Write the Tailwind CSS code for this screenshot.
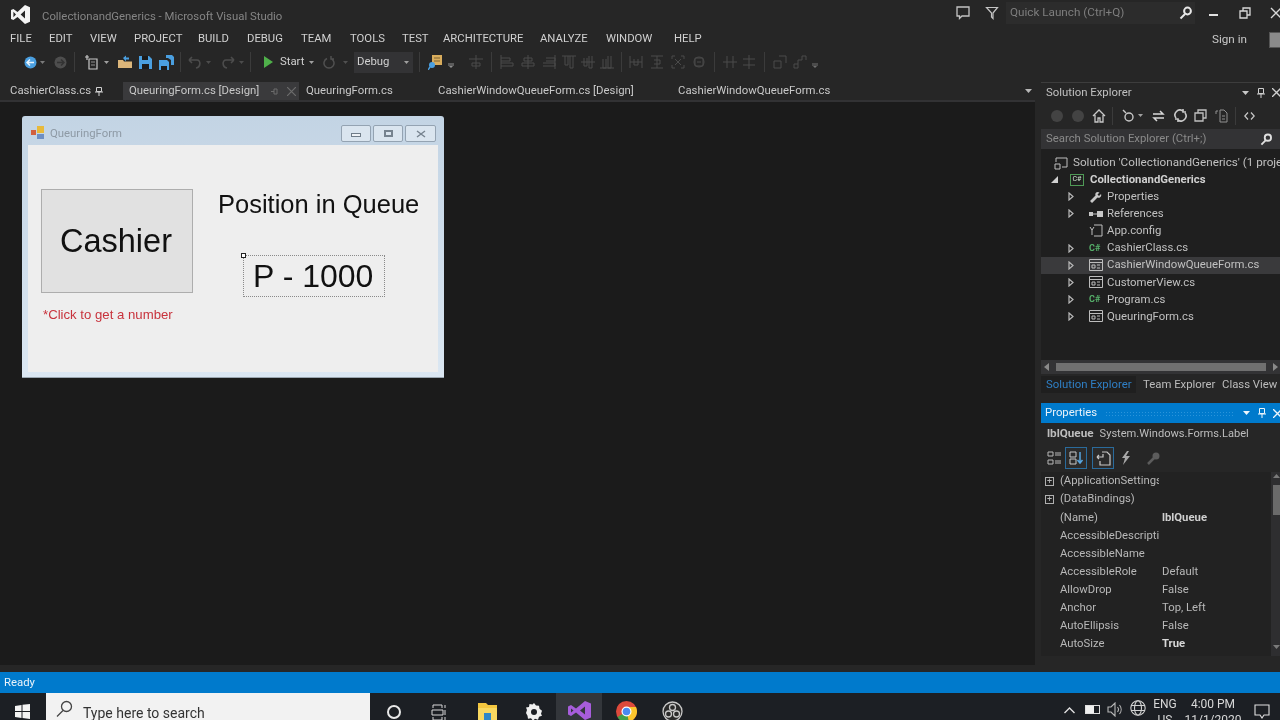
<!DOCTYPE html>
<html lang="en">
<head>
  <meta charset="UTF-8">
  <meta name="viewport" content="width=device-width, initial-scale=1.0">
  <title>CollectionandGenerics - Microsoft Visual Studio</title>
  <script src="https://cdn.jsdelivr.net/npm/@tailwindcss/browser@4"></script>
</head>
<body class="bg-[#262626]">
  <div class="w-[1280px] h-[720px] overflow-hidden flex flex-col bg-[#262626] text-[#c8c8c8] text-[11.35px] leading-none font-['Roboto',sans-serif] blur-[0.35px]">

    <!-- title bar -->
    <div class="h-[28px] shrink-0 flex items-center relative">
      <svg class="ml-[10px] w-[21px] h-[21px]" viewBox="0 0 21 21"><path d="M15 1l5 2.200v14.600L15 20 7.500 13 3.400 16 1 15V6l2.400-1L7.500 8zM3.400 7.800v5.400l2.600-2.700zM15 6.500l-4.400 4 4.400 4z" fill="#f4f4f4" fill-rule="evenodd"/></svg>
      <span class="ml-[11px] mt-[6px] text-[#858585] whitespace-nowrap">CollectionandGenerics - Microsoft Visual Studio</span>
      <div class="ml-auto flex items-center mt-[-2px]">
        <svg class="w-[16px] h-[16px]" viewBox="0 0 16 16" fill="none" stroke="#c4c4c4" stroke-width="1.300"><path d="M2 2h12v9H7l-2.500 2.500V11H2z"/></svg>
        <svg class="ml-[14px] w-[14px] h-[14px]" viewBox="0 0 14 14" fill="none" stroke="#c4c4c4" stroke-width="1.200"><path d="M1.500 1.500h11L8 7v5.500L6.500 11V7z"/></svg>
        <div class="ml-[7px] w-[189px] h-[22px] bg-[#2c2c2c] flex items-center justify-between pl-[4px] pr-[2px]">
          <span class="text-[#7e7e7e] text-[11.7px]">Quick Launch (Ctrl+Q)</span>
          <svg class="w-[14px] h-[14px]" viewBox="0 0 14 14" fill="none" stroke="#e8e8e8" stroke-width="2"><circle cx="8.500" cy="5" r="3.400"/><path d="M6 8l-4.500 4.500"/></svg>
        </div>
        <div class="ml-[14px] w-[9px] h-[2px] bg-[#e0e0e0] mt-[4px]"></div>
        <svg class="ml-[21px] w-[12px] h-[12px]" viewBox="0 0 12 12" fill="none" stroke="#d8d8d8" stroke-width="1.300"><path d="M1 4h7v7H1zM4 4V1h7v7H8"/></svg>
        <svg class="ml-[19px] w-[12px] h-[12px] mr-[-2px]" viewBox="0 0 12 12" fill="none" stroke="#d8d8d8" stroke-width="1.400"><path d="M1 1l10 10M11 1L1 11"/></svg>
      </div>
    </div>

    <!-- menu bar -->
    <div class="h-[22px] shrink-0 flex items-center pl-[10px] text-[#d0d0d0] text-[11.3px]">
      <span class="w-[39px]">FILE</span>
      <span class="w-[41px]">EDIT</span>
      <span class="w-[44px]">VIEW</span>
      <span class="w-[64px]">PROJECT</span>
      <span class="w-[49px]">BUILD</span>
      <span class="w-[54px]">DEBUG</span>
      <span class="w-[49px]">TEAM</span>
      <span class="w-[52px]">TOOLS</span>
      <span class="w-[41px]">TEST</span>
      <span class="w-[97px]">ARCHITECTURE</span>
      <span class="w-[66px]">ANALYZE</span>
      <span class="w-[68px]">WINDOW</span>
      <span>HELP</span>
      <span class="ml-auto mr-[22px] mt-[2px] text-[#c8c8c8] text-[11.7px]">Sign in</span>
      <div class="w-[12px] h-[16px] bg-[#8a8a8a] border border-[#555] mr-[-1px] mt-[2px] shrink-0"></div>
    </div>

    <!-- toolbar -->
    <div class="h-[26px] shrink-0 flex items-center pb-[2px]">
      <svg class="ml-[24px] w-[13px] h-[13px]" viewBox="0 0 13 13"><circle cx="6.500" cy="6.500" r="6" fill="#4a9fe0"/><path d="M3 6.500h7M6 3.500l-3 3 3 3" fill="none" stroke="#e8f3fc" stroke-width="1.500"/></svg>
      <svg class="ml-[3px] w-[5px] h-[3px]" viewBox="0 0 5 3"><path d="M0 0h5L2.500 3z" fill="#7a7a7a"/></svg>
      <svg class="ml-[9px] w-[13px] h-[13px]" viewBox="0 0 13 13"><circle cx="6.500" cy="6.500" r="6" fill="#4e4e4e"/><path d="M3 6.500h7M7 3.500l3 3-3 3" fill="none" stroke="#333" stroke-width="1.500"/></svg>
      <div class="ml-[7px] w-px h-[20px] bg-[#3b3b3b]"></div>
      <svg class="ml-[10px] w-[14px] h-[16px]" viewBox="0 0 14 16" fill="none" stroke="#c8c8c8" stroke-width="1.200"><path d="M4 5h8v10H4zM2 1v5M0 3h4"/><path d="M6 8h4M6 11h4" stroke="#909090"/></svg>
      <svg class="ml-[5px] w-[5px] h-[3px]" viewBox="0 0 5 3"><path d="M0 0h5L2.500 3z" fill="#a0a0a0"/></svg>
      <svg class="ml-[9px] w-[14px] h-[14px]" viewBox="0 0 14 14"><path d="M0 5h5l1 1.500h8V13H0z" fill="#dcb67a"/><path d="M5 3l3-2.500v2h3v2H8v2z" fill="#4a9fe0"/></svg>
      <svg class="ml-[7px] w-[13px] h-[13px]" viewBox="0 0 13 13"><path d="M0 0h10l3 3v10H0z" fill="#4a9fe0"/><path d="M3 0h6v4H3zM3 8h7v5H3z" fill="#1b1b1b"/></svg>
      <svg class="ml-[7px] w-[15px] h-[15px]" viewBox="0 0 15 15"><path d="M0 5h8l2 2v8H0z" fill="#4a9fe0"/><path d="M2 11h6v4H2z" fill="#1b1b1b"/><path d="M7 0h6l2 2v8h-3V5L9 3H7z" fill="#4a9fe0"/></svg>
      <div class="ml-[6px] w-px h-[20px] bg-[#3b3b3b]"></div>
      <svg class="ml-[7px] w-[14px] h-[14px]" viewBox="0 0 14 14" fill="none" stroke="#4c4c4c" stroke-width="1.600"><path d="M1 5l3-3M1 5l3 3M1 5h8c4 0 4 7-1 8"/></svg>
      <svg class="ml-[4px] w-[5px] h-[3px]" viewBox="0 0 5 3"><path d="M0 0h5L2.500 3z" fill="#4c4c4c"/></svg>
      <svg class="ml-[10px] w-[14px] h-[14px]" viewBox="0 0 14 14" fill="none" stroke="#4c4c4c" stroke-width="1.600"><path d="M13 5l-3-3M13 5l-3 3M13 5H5c-4 0-4 7 1 8"/></svg>
      <svg class="ml-[4px] w-[5px] h-[3px]" viewBox="0 0 5 3"><path d="M0 0h5L2.500 3z" fill="#4c4c4c"/></svg>
      <div class="ml-[6px] w-px h-[20px] bg-[#3b3b3b]"></div>
      <svg class="ml-[12px] w-[10px] h-[12px]" viewBox="0 0 10 12"><path d="M1 0l9 6-9 6z" fill="#4fb04a"/></svg>
      <span class="ml-[7px] text-[#d0d0d0] w-[24px]">Start</span>
      <svg class="ml-[5px] w-[5px] h-[3px]" viewBox="0 0 5 3"><path d="M0 0h5L2.500 3z" fill="#a0a0a0"/></svg>
      <svg class="ml-[9px] w-[13px] h-[13px]" viewBox="0 0 13 13" fill="none" stroke="#505050" stroke-width="1.500"><path d="M8 2.500a5 5 0 1 1-4 0M8 0v3h3"/></svg>
      <svg class="ml-[7px] w-[5px] h-[3px]" viewBox="0 0 5 3"><path d="M0 0h5L2.500 3z" fill="#505050"/></svg>
      <div class="ml-[6px] w-[59px] h-[21px] bg-[#333335] flex items-center justify-between pl-[3px] pr-[4px] text-[#d0d0d0]">
        <span>Debug</span>
        <svg class="w-[5px] h-[3px]" viewBox="0 0 5 3"><path d="M0 0h5L2.500 3z" fill="#a0a0a0"/></svg>
      </div>
      <div class="ml-[6px] w-px h-[20px] bg-[#3b3b3b]"></div>
      <svg class="ml-[8px] w-[15px] h-[15px]" viewBox="0 0 15 15"><path d="M4 0h10v10H4z" fill="#d8ac5c"/><path d="M6 3h6M6 6h6" stroke="#7c6230"/><circle cx="4" cy="10" r="3" fill="#4a9fe0"/><path d="M2 12l-2 3" stroke="#4a9fe0" stroke-width="1.500"/></svg>
      <svg class="ml-[5px] mt-[7px] w-[6px] h-[5px]" viewBox="0 0 6 5"><path d="M0 0h6M0 2h6" stroke="#909090"/><path d="M1 3h4L3 5z" fill="#909090"/></svg>

      <!-- layout toolbar, disabled -->
      <div class="ml-[15px] flex items-center gap-[5px]">
        <svg class="w-[14px] h-[14px]" viewBox="0 0 14 14" fill="none" stroke="#4a4a4a"><path d="M0 4h14M7 0v14M3 8h8v3H3z"/></svg>
        <div class="mx-[3px] w-px h-[20px] bg-[#3b3b3b]"></div>
        <svg class="w-[14px] h-[14px]" viewBox="0 0 14 14" fill="none" stroke="#4a4a4a"><path d="M1 0v14M1 3h9v3H1M1 8h12v3H1"/></svg>
        <svg class="ml-[2px] w-[14px] h-[14px]" viewBox="0 0 14 14" fill="none" stroke="#4a4a4a"><path d="M7 0v14M3 3h8v3H3zM1 8h12v3H1z"/></svg>
        <svg class="ml-[2px] w-[14px] h-[14px]" viewBox="0 0 14 14" fill="none" stroke="#4a4a4a"><path d="M13 0v14M4 3h9v3H4M1 8h12v3H1"/></svg>
        <svg class="ml-[1px] w-[14px] h-[14px]" viewBox="0 0 14 14" fill="none" stroke="#4a4a4a"><path d="M0 1h14M3 1v9h3V1M8 1v12h3V1"/></svg>
        <svg class="w-[14px] h-[14px]" viewBox="0 0 14 14" fill="none" stroke="#4a4a4a"><path d="M0 7h14M3 3v8h3V3M8 1v12h3V1"/></svg>
        <svg class="w-[14px] h-[14px]" viewBox="0 0 14 14" fill="none" stroke="#4a4a4a"><path d="M0 13h14M3 4v9h3V4M8 1v12h3V1"/></svg>
        <div class="mx-[2px] w-px h-[20px] bg-[#3b3b3b]"></div>
        <svg class="w-[14px] h-[14px]" viewBox="0 0 14 14" fill="none" stroke="#4a4a4a"><path d="M1 1v12M13 1v12M1 7h12M5 4v6h4V4"/></svg>
        <svg class="ml-[2px] w-[14px] h-[14px]" viewBox="0 0 14 14" fill="none" stroke="#4a4a4a"><path d="M1 1h12M1 13h12M7 1v12M4 5h6v4H4"/></svg>
        <svg class="ml-[2px] w-[14px] h-[14px]" viewBox="0 0 14 14" fill="none" stroke="#4a4a4a"><path d="M1 4V1h3M10 1h3v3M1 10v3h3M10 13h3v-3M4 4l6 6M10 4l-6 6"/></svg>
        <svg class="ml-[2px] w-[14px] h-[14px]" viewBox="0 0 14 14" fill="none" stroke="#4a4a4a"><circle cx="7" cy="7" r="5"/><path d="M3 3h8v8H3zM5 7h4"/></svg>
        <div class="mx-[3px] w-px h-[20px] bg-[#3b3b3b]"></div>
        <svg class="w-[14px] h-[14px]" viewBox="0 0 14 14" fill="none" stroke="#4a4a4a"><path d="M4 1v12M10 1v12M0 7h14"/></svg>
        <svg class="w-[14px] h-[14px]" viewBox="0 0 14 14" fill="none" stroke="#4a4a4a"><path d="M1 4h12M1 10h12M7 0v14"/></svg>
        <div class="mx-[3px] w-px h-[20px] bg-[#3b3b3b]"></div>
        <svg class="w-[14px] h-[14px]" viewBox="0 0 14 14" fill="none" stroke="#4a4a4a"><path d="M1 6h7v7H1zM6 1h7v7"/></svg>
        <svg class="ml-[1px] w-[14px] h-[14px]" viewBox="0 0 14 14" fill="none" stroke="#4a4a4a"><path d="M1 9h4v4H1zM5 9V5h4V1h4v4"/></svg>
        <svg class="mt-[7px] w-[6px] h-[5px]" viewBox="0 0 6 5"><path d="M0 0h6M0 2h6" stroke="#707070"/><path d="M1 3h4L3 5z" fill="#707070"/></svg>
      </div>
    </div>

    <!-- main area -->
    <div class="h-[596px] shrink-0 flex">

      <!-- document well -->
      <div class="w-[1035px] shrink-0 flex flex-col pb-[7px]">
        <div class="h-[18px] mt-[6px] shrink-0 flex items-stretch text-[#c8c8c8] relative whitespace-nowrap">
          <div class="w-[123px] pl-[10px] flex items-center">
            <span class="w-[85px]">CashierClass.cs</span>
            <svg class="w-[8px] h-[9px]" viewBox="0 0 8 9" fill="none" stroke="#d0d0d0"><path d="M1.500 .5h5v4h-5zM0 5h8M4 5v4"/></svg>
          </div>
          <div class="w-[176px] bg-[#3a3a3c] pl-[6px] flex items-center">
            <span class="w-[142px]">QueuringForm.cs [Design]</span>
            <svg class="w-[7px] h-[7px]" viewBox="0 0 7 7" fill="none" stroke="#6c6c6c"><path d="M0 3.500h3M3 1v5h3V1z"/></svg>
            <svg class="ml-[9px] w-[9px] h-[9px]" viewBox="0 0 9 9" fill="none" stroke="#6c6c6c" stroke-width="1.200"><path d="M0 0l9 9M9 0L0 9"/></svg>
          </div>
          <span class="w-[139px] pl-[7px] flex items-center">QueuringForm.cs</span>
          <span class="w-[240px] flex items-center">CashierWindowQueueForm.cs [Design]</span>
          <span class="flex items-center">CashierWindowQueueForm.cs</span>
          <svg class="absolute right-[3px] top-[7px] w-[7px] h-[4px]" viewBox="0 0 7 4"><path d="M0 0h7L3.500 4z" fill="#b8b8b8"/></svg>
        </div>
        <div class="h-[2px] shrink-0 bg-[#323234]"></div>

        <!-- designer surface -->
        <div class="flex-1 bg-[#1b1b1b] relative">
          <div class="absolute left-[22px] top-[14px] w-[422px] h-[262px] bg-gradient-to-b from-[#c3d4e4] to-[#dbe7f2] rounded-t-[3px] border-b border-[#9aa6b0]">
            <svg class="absolute left-[9px] top-[10px] w-[14px] h-[14px]" viewBox="0 0 14 14"><path d="M6 0h7v7H6z" fill="#e8b93a"/><path d="M0 4h5v5H0z" fill="#d2603f"/><path d="M6 8h7v5H6z" fill="#6d8fc4"/></svg>
            <span class="absolute left-[28px] top-[12px] text-[#8e9aa5]">QueuringForm</span>
            <div class="absolute left-[319px] top-[9px] w-[30px] h-[17px] border border-[#94a3b2] rounded-[2px] bg-[#dae5ef] flex items-center justify-center">
              <div class="w-[10px] h-[4px] border border-[#6f7c88] bg-[#eef2f6] mt-[2px]"></div>
            </div>
            <div class="absolute left-[351px] top-[9px] w-[30px] h-[17px] border border-[#94a3b2] rounded-[2px] bg-[#dae5ef] flex items-center justify-center">
              <div class="w-[9px] h-[7px] border-2 border-[#76838f]"></div>
            </div>
            <div class="absolute left-[383px] top-[9px] w-[31px] h-[17px] border border-[#94a3b2] rounded-[2px] bg-[#dae5ef] flex items-center justify-center">
              <svg class="w-[10px] h-[8px]" viewBox="0 0 10 8" fill="none" stroke="#76838f" stroke-width="1.400"><path d="M1 1l8 6M9 1L1 7"/></svg>
            </div>

            <div class="absolute left-[6px] top-[29px] w-[410px] h-[227px] bg-[#eeeeee] font-['Liberation_Sans',sans-serif] text-[#111]">
              <!-- form controls sit at designer coordinates -->
              <div class="absolute left-[13px] top-[44px] w-[152px] h-[104px] bg-[#e1e1e1] border border-[#adadad] flex items-center justify-center text-[32.5px] pr-[2px]">Cashier</div>
              <span class="absolute left-[190px] top-[45px] text-[25.5px] leading-[28px] whitespace-nowrap">Position in Queue</span>
              <div class="absolute left-[215px] top-[110px] w-[142px] h-[42px] border border-dotted border-[#8a8a8a] flex items-center pl-[9px] text-[32px] whitespace-nowrap">P - 1000</div>
              <div class="absolute left-[213px] top-[108px] w-[5px] h-[5px] bg-white border border-[#222]"></div>
              <span class="absolute left-[15px] top-[162px] text-[13.2px] leading-[15px] text-[#c8323c] whitespace-nowrap">*Click to get a number</span>
            </div>
          </div>
        </div>
      </div>

      <!-- right tool windows -->
      <div class="w-[239px] ml-[6px] shrink-0 flex flex-col">
        <!-- solution explorer -->
        <div class="h-[20px] mt-[6px] shrink-0 flex items-center pl-[5px] text-[#c0c0c0] border-t border-[#3d3d3d]">
          <span class="mt-[1px]">Solution Explorer</span>
          <svg class="ml-auto w-[7px] h-[4px]" viewBox="0 0 7 4"><path d="M0 0h7L3.500 4z" fill="#c8c8c8"/></svg>
          <svg class="ml-[8px] w-[8px] h-[10px]" viewBox="0 0 8 10" fill="none" stroke="#d0d0d0"><path d="M1.500 .5h5v5h-5zM0 6h8M4 6v4"/></svg>
          <svg class="ml-[7px] mr-[-1px] w-[9px] h-[9px]" viewBox="0 0 9 9" fill="none" stroke="#d0d0d0" stroke-width="1.300"><path d="M0 0l9 9M9 0L0 9"/></svg>
        </div>
        <div class="h-[27px] shrink-0 flex items-center pl-[10px]">
          <div class="w-[12px] h-[12px] rounded-full bg-[#434343]"></div>
          <div class="ml-[9px] w-[12px] h-[12px] rounded-full bg-[#434343]"></div>
          <svg class="ml-[8px] w-[14px] h-[14px]" viewBox="0 0 14 14" fill="none" stroke="#c8c8c8" stroke-width="1.300"><path d="M1 7l6-6 6 6M3 6v7h3V9h2v4h3V6"/></svg>
          <div class="ml-[6px] w-px h-[18px] bg-[#3b3b3b]"></div>
          <svg class="ml-[9px] w-[12px] h-[13px]" viewBox="0 0 12 13" fill="none" stroke="#c8c8c8" stroke-width="1.400"><circle cx="7" cy="8" r="4"/><path d="M1 1l3 3"/></svg>
          <svg class="ml-[4px] w-[5px] h-[3px]" viewBox="0 0 5 3"><path d="M0 0h5L2.500 3z" fill="#a0a0a0"/></svg>
          <svg class="ml-[9px] w-[13px] h-[12px]" viewBox="0 0 13 12" fill="none" stroke="#d8d8d8" stroke-width="1.500"><path d="M1 4h10L8 1M12 8H2l3 3"/></svg>
          <svg class="ml-[9px] w-[13px] h-[13px]" viewBox="0 0 13 13" fill="none" stroke="#c8c8c8" stroke-width="1.600"><path d="M2 9a5 5 0 0 1 7-7M11 4a5 5 0 0 1-7 7"/><path d="M9 0v3h3M4 13v-3H1"/></svg>
          <svg class="ml-[7px] w-[13px] h-[13px]" viewBox="0 0 13 13" fill="none" stroke="#c0c0c0" stroke-width="1.300"><path d="M1 4h8v8H1zM4 4V1h8v8H9"/></svg>
          <svg class="ml-[8px] w-[13px] h-[14px]" viewBox="0 0 13 14" fill="none" stroke="#909090"><path d="M3 2H1v3M5 1h4l3 3v9H5zM7 7h3M7 10h3"/></svg>
          <div class="ml-[7px] w-px h-[18px] bg-[#3b3b3b]"></div>
          <svg class="ml-[8px] w-[11px] h-[8px]" viewBox="0 0 11 8" fill="none" stroke="#c8c8c8" stroke-width="1.200"><path d="M4 .5L.8 4 4 7.500M7 .5L10.200 4 7 7.500"/></svg>
        </div>
        <div class="h-[20px] shrink-0 bg-[#333335] flex items-center pl-[5px] pr-[2px] text-[#8a8a8a] mr-[-1px]">
          <span>Search Solution Explorer (Ctrl+;)</span>
          <svg class="ml-auto mr-[6px] w-[13px] h-[13px]" viewBox="0 0 14 14" fill="none" stroke="#e0e0e0" stroke-width="2"><circle cx="8.500" cy="5" r="3.400"/><path d="M6 8l-4.500 4.500"/></svg>
        </div>

        <div class="h-[211px] shrink-0 bg-[#1f1f1f] pt-[5px] text-[#c0c0c0] overflow-hidden mr-[-1px]">
          <div class="h-[17.1px] flex items-center pl-[13px] whitespace-nowrap">
            <svg class="w-[14px] h-[14px] shrink-0" viewBox="0 0 14 14" fill="none" stroke="#c0c0c0"><path d="M2 6V2h11v9H8M1 8h5v5H1z"/></svg>
            <span class="ml-[5px] text-[11.7px]">Solution 'CollectionandGenerics' (1 project)</span>
          </div>
          <div class="h-[17.1px] flex items-center pl-[10px] whitespace-nowrap">
            <svg class="w-[7px] h-[7px] shrink-0" viewBox="0 0 7 7"><path d="M7 0v7H0z" fill="#d0d0d0"/></svg>
            <div class="ml-[12px] w-[14px] h-[12px] border border-[#4f9a56] text-[7px] text-[#cfe7d1] flex items-center justify-center shrink-0">C#</div>
            <span class="ml-[6px] font-bold text-[#d0d0d0]">CollectionandGenerics</span>
          </div>
          <div class="h-[17.1px] flex items-center pl-[27px]">
            <svg class="w-[6px] h-[9px] shrink-0" viewBox="0 0 6 9" fill="none" stroke="#b8b8b8" stroke-width="1.200"><path d="M1 1l4 3.500-4 3.500z"/></svg>
            <svg class="ml-[16px] w-[12px] h-[12px] shrink-0" viewBox="0 0 12 12" fill="#c8c8c8"><path d="M11 3L9 5 7.500 3.500l2-2C7 0 4.500 2 5.500 4.500L0 10l2 2 5.500-5.500C10 7.500 12 5 11 3z"/></svg>
            <span class="ml-[5px]">Properties</span>
          </div>
          <div class="h-[17.1px] flex items-center pl-[27px]">
            <svg class="w-[6px] h-[9px] shrink-0" viewBox="0 0 6 9" fill="none" stroke="#b8b8b8" stroke-width="1.200"><path d="M1 1l4 3.500-4 3.500z"/></svg>
            <svg class="ml-[15px] w-[14px] h-[6px] shrink-0" viewBox="0 0 14 6" fill="#c8c8c8"><path d="M0 1h4v4H0zM8 0h6v6H8zM4 2.500h4v1H4z"/></svg>
            <span class="ml-[4px]">References</span>
          </div>
          <div class="h-[17.1px] flex items-center pl-[48px]">
            <svg class="w-[14px] h-[13px] shrink-0" viewBox="0 0 14 13" fill="none" stroke="#c0c0c0"><path d="M5 1h8v11H5M1 3l2 3 2-3M3 6v5"/></svg>
            <span class="ml-[4px]">App.config</span>
          </div>
          <div class="h-[17.1px] flex items-center pl-[27px]">
            <svg class="w-[6px] h-[9px] shrink-0" viewBox="0 0 6 9" fill="none" stroke="#b8b8b8" stroke-width="1.200"><path d="M1 1l4 3.500-4 3.500z"/></svg>
            <span class="ml-[15px] w-[14px] text-[9px] font-bold text-[#56b06a] shrink-0">C#</span>
            <span class="ml-[4px]">CashierClass.cs</span>
          </div>
          <div class="h-[17.1px] flex items-center pl-[27px] bg-[#3a3a3c]">
            <svg class="w-[6px] h-[9px] shrink-0" viewBox="0 0 6 9" fill="none" stroke="#b8b8b8" stroke-width="1.200"><path d="M1 1l4 3.500-4 3.500z"/></svg>
            <svg class="ml-[15px] w-[14px] h-[12px] shrink-0" viewBox="0 0 14 12" fill="none" stroke="#bdbdbd"><path d="M.5 .5h13v11H.5zM.5 3.500h13M3 6h3v3H3zM8 6h3M8 9h3"/></svg>
            <span class="ml-[4px]">CashierWindowQueueForm.cs</span>
          </div>
          <div class="h-[17.1px] flex items-center pl-[27px]">
            <svg class="w-[6px] h-[9px] shrink-0" viewBox="0 0 6 9" fill="none" stroke="#b8b8b8" stroke-width="1.200"><path d="M1 1l4 3.500-4 3.500z"/></svg>
            <svg class="ml-[15px] w-[14px] h-[12px] shrink-0" viewBox="0 0 14 12" fill="none" stroke="#bdbdbd"><path d="M.5 .5h13v11H.5zM.5 3.500h13M3 6h3v3H3zM8 6h3M8 9h3"/></svg>
            <span class="ml-[4px]">CustomerView.cs</span>
          </div>
          <div class="h-[17.1px] flex items-center pl-[27px]">
            <svg class="w-[6px] h-[9px] shrink-0" viewBox="0 0 6 9" fill="none" stroke="#b8b8b8" stroke-width="1.200"><path d="M1 1l4 3.500-4 3.500z"/></svg>
            <span class="ml-[15px] w-[14px] text-[9px] font-bold text-[#56b06a] shrink-0">C#</span>
            <span class="ml-[4px]">Program.cs</span>
          </div>
          <div class="h-[17.1px] flex items-center pl-[27px]">
            <svg class="w-[6px] h-[9px] shrink-0" viewBox="0 0 6 9" fill="none" stroke="#b8b8b8" stroke-width="1.200"><path d="M1 1l4 3.500-4 3.500z"/></svg>
            <svg class="ml-[15px] w-[14px] h-[12px] shrink-0" viewBox="0 0 14 12" fill="none" stroke="#bdbdbd"><path d="M.5 .5h13v11H.5zM.5 3.500h13M3 6h3v3H3zM8 6h3M8 9h3"/></svg>
            <span class="ml-[4px]">QueuringForm.cs</span>
          </div>
        </div>

        <div class="h-[14px] shrink-0 bg-[#333335] flex items-center px-[3px] mr-[-1px]">
          <svg class="w-[5px] h-[8px] shrink-0" viewBox="0 0 5 8"><path d="M5 0v8L0 4z" fill="#8a8a8a"/></svg>
          <div class="ml-[7px] w-[211px] h-[8px] bg-[#707070]"></div>
          <svg class="ml-[7px] w-[5px] h-[8px] shrink-0" viewBox="0 0 5 8"><path d="M0 0v8l5-4z" fill="#8a8a8a"/></svg>
        </div>
        <div class="h-[21px] shrink-0 flex items-center whitespace-nowrap">
          <div class="h-[17px] w-[95px] pl-[5px] bg-[#1f1f1f] text-[#2f7fc5] flex items-center">Solution Explorer</div>
          <span class="ml-[7px] w-[79px] text-[#bcbcbc]">Team Explorer</span>
          <span class="text-[#bcbcbc]">Class View</span>
        </div>
        <div class="h-[8px] shrink-0"></div>

        <!-- properties -->
        <div class="h-[20px] shrink-0 bg-[#007acc] flex items-center pl-[4px] text-[#e8f2fa] mr-[-1px]">
          <span>Properties</span>
          <div class="ml-[8px] w-[130px] h-[5px] bg-[radial-gradient(#2a94db_1px,transparent_1px)] bg-[length:3px_3px]"></div>
          <svg class="ml-auto w-[7px] h-[4px]" viewBox="0 0 7 4"><path d="M0 0h7L3.500 4z" fill="#eef6fc"/></svg>
          <svg class="ml-[8px] w-[8px] h-[10px]" viewBox="0 0 8 10" fill="none" stroke="#eef6fc"><path d="M1.500 .5h5v5h-5zM0 6h8M4 6v4"/></svg>
          <svg class="ml-[7px] mr-[-1px] w-[9px] h-[9px]" viewBox="0 0 9 9" fill="none" stroke="#eef6fc" stroke-width="1.300"><path d="M0 0l9 9M9 0L0 9"/></svg>
        </div>
        <div class="h-[21px] shrink-0 flex items-center pl-[6px] text-[#bdbdbd] whitespace-nowrap">
          <span class="font-bold text-[11.7px]">lblQueue</span>
          <span class="ml-[6px] text-[11.1px]">System.Windows.Forms.Label</span>
        </div>
        <div class="h-[28px] shrink-0 flex items-center pl-[6px]">
          <svg class="w-[15px] h-[14px]" viewBox="0 0 15 14" fill="none" stroke="#b8b8b8"><path d="M1 1h5v4H1zM1 9h5v4H1zM8 2h6M8 4h6M8 10h6M8 12h6"/></svg>
          <div class="ml-[3px] w-[22px] h-[22px] border border-[#2a6b9c] flex items-center justify-center bg-[#2b2b2b]">
            <svg class="w-[15px] h-[14px]" viewBox="0 0 15 14" fill="none" stroke="#c8c8c8"><path d="M1 1h6v5H1zM1 8h6v5H1z"/><path d="M11 1v11M8.500 9l2.500 3 2.500-3" stroke="#58a6e0" stroke-width="1.500"/></svg>
          </div>
          <div class="ml-[5px] w-[22px] h-[22px] border border-[#2a6b9c] flex items-center justify-center bg-[#2b2b2b]">
            <svg class="w-[15px] h-[15px]" viewBox="0 0 15 15" fill="none" stroke="#c8c8c8" stroke-width="1.200"><path d="M6 1h5l3 3v10H4V10M1 6h6V3M1 6l2-2M1 6l2 2"/></svg>
          </div>
          <svg class="ml-[7px] w-[10px] h-[14px]" viewBox="0 0 10 14"><path d="M6 0L1 7h3l-2 7 7-9H5l3-5z" fill="#a8a8a8"/></svg>
          <svg class="ml-[16px] w-[13px] h-[13px]" viewBox="0 0 13 13"><circle cx="9" cy="4" r="3.500" fill="#5c5c5c"/><path d="M7 6l-6 6" stroke="#5c5c5c" stroke-width="2.500"/></svg>
        </div>

        <!-- property grid -->
        <div class="h-[184px] shrink-0 bg-[#222222] flex mr-[-1px] text-[#b8b8b8] text-[11.3px] overflow-hidden">
          <div class="w-[231px] grid grid-cols-[18px_103px_1fr] auto-rows-[18.1px] items-center whitespace-nowrap">
            <span class="w-[9px] h-[9px] border border-[#b0b0b0] ml-[4px] flex items-center justify-center text-[9px]">+</span><span class="pl-[1px] w-[100px] overflow-hidden">(ApplicationSettings)</span><span></span>
            <span class="w-[9px] h-[9px] border border-[#b0b0b0] ml-[4px] flex items-center justify-center text-[9px]">+</span><span class="col-span-2 pl-[1px]">(DataBindings)</span>
            <span></span><span class="pl-[1px]">(Name)</span><span class="font-bold text-[#d0d0d0]">lblQueue</span>
            <span></span><span class="pl-[1px] w-[100px] overflow-hidden">AccessibleDescription</span><span></span>
            <span></span><span class="pl-[1px]">AccessibleName</span><span></span>
            <span></span><span class="pl-[1px]">AccessibleRole</span><span>Default</span>
            <span></span><span class="pl-[1px]">AllowDrop</span><span>False</span>
            <span></span><span class="pl-[1px]">Anchor</span><span>Top, Left</span>
            <span></span><span class="pl-[1px]">AutoEllipsis</span><span>False</span>
            <span></span><span class="pl-[1px]">AutoSize</span><span class="font-bold text-[#d8d8d8]">True</span>
            <span></span><span></span><span class="mt-[-6px] w-[16px] h-px bg-[#b0b0b0]"></span>
          </div>
          <div class="w-[10px] ml-auto bg-[#2e2e30] flex flex-col items-center justify-between py-[2px]">
            <div class="flex flex-col items-center gap-[7px]">
              <svg class="w-[7px] h-[4px]" viewBox="0 0 7 4"><path d="M0 4h7L3.500 0z" fill="#7a7a7a"/></svg>
              <div class="w-[7px] h-[30px] bg-[#6a6a6a]"></div>
            </div>
            <svg class="w-[7px] h-[4px] mb-[5px]" viewBox="0 0 7 4"><path d="M0 0h7L3.500 4z" fill="#7a7a7a"/></svg>
          </div>
        </div>
      </div>
    </div>

    <!-- status bar -->
    <div class="h-[21px] shrink-0 bg-[#007acc] flex items-center pl-[4px] text-[#e8f2fa]">
      <span class="mt-[1px]">Ready</span>
    </div>

    <!-- taskbar -->
    <div class="flex-1 bg-[#1c1f24] flex items-start relative">
      <svg class="ml-[15px] mt-[11px] w-[15px] h-[15px]" viewBox="0 0 15 15" fill="#f4f4f4"><path d="M0 2l6.500-1v6H0zM7.500 .8L15 0v7H7.500zM0 8h6.500v6L0 13zM7.500 8H15v7l-7.500-1z"/></svg>
      <div class="ml-[16px] w-[324px] h-[27px] bg-[#f2f2f2] flex items-center pl-[10px] text-[#333] text-[14px]">
        <svg class="w-[17px] h-[17px] shrink-0 mt-[3px]" viewBox="0 0 17 17" fill="none" stroke="#444" stroke-width="1.300"><circle cx="10.500" cy="6.500" r="5"/><path d="M7 10.500l-6 6"/></svg>
        <span class="ml-[10px] mt-[12px]">Type here to search</span>
      </div>
      <div class="ml-[17px] mt-[12px] w-[14px] h-[14px] rounded-full border-2 border-[#e8e8e8] shrink-0"></div>
      <svg class="ml-[30px] mt-[11px] w-[16px] h-[16px]" viewBox="0 0 16 16" fill="none" stroke="#d8d8d8"><path d="M2 4V1h9v3M1 6h11v5H1zM2 13v3h9v-3M14 1v3M14 6v5M14 13v3"/></svg>
      <svg class="ml-[31px] mt-[10px] w-[19px] h-[17px]" viewBox="0 0 19 17"><path d="M0 0h8l2 2h9v15H0z" fill="#f3c63f"/><path d="M0 5h19v12H0z" fill="#f8d860"/><path d="M6 10h7v7H6z" fill="#2d87c8"/></svg>
      <svg class="ml-[28px] mt-[10px] w-[18px] h-[18px]" viewBox="0 0 18 18"><path d="M9 0l2 2.500 3 .2.500 3 2.500 2-1 3 1 2-3 1-1 3-3-1-2 2-2-2.500-3 .5-.5-3L1 10l1-3-1-2.500 3-.5.500-3 3 .5z" fill="#f0f0f0"/><circle cx="9" cy="9" r="3" fill="#1c1f24"/></svg>
      <div class="ml-[13px] w-[46px] h-[27px] bg-[#33363b] flex items-start justify-center pt-[8px] shrink-0">
        <svg class="w-[23px] h-[19px]" viewBox="0 0 23 19"><path d="M17 0l6 2.500v14L17 19 8 11.500 3 15l-3-1.500V5.500L3 4l5 3.500zM3 7.500v4l2.500-2zM17 5.500l-5 4 5 4z" fill="#a75ddb" fill-rule="evenodd"/></svg>
      </div>
      <svg class="ml-[14px] mt-[8px] w-[21px] h-[21px]" viewBox="0 0 21 21"><circle cx="10.500" cy="10.500" r="10.500" fill="#dd4a3c"/><path d="M10.500 10.500L1.500 16A10.500 10.500 0 0 0 13 20.700z" fill="#43a047"/><path d="M10.500 10.500L13 20.700A10.500 10.500 0 0 0 20 6h-9z" fill="#fbc52d"/><circle cx="10.500" cy="10.500" r="5" fill="#fff"/><circle cx="10.500" cy="10.500" r="3.800" fill="#4a8af0"/></svg>
      <svg class="ml-[25px] mt-[8px] w-[21px] h-[21px]" viewBox="0 0 21 21" fill="none" stroke="#c8c8c8" stroke-width="1.300"><circle cx="10.500" cy="10.500" r="9.500" fill="#2a2a2a"/><circle cx="10.500" cy="6.500" r="3"/><circle cx="6.500" cy="13" r="3"/><circle cx="14.500" cy="13" r="3"/></svg>

      <div class="ml-auto flex items-start">
        <svg class="mt-[14px] w-[11px] h-[7px]" viewBox="0 0 11 7" fill="none" stroke="#e0e0e0" stroke-width="1.400"><path d="M.5 6l5-5 5 5"/></svg>
        <div class="ml-[10px] mt-[12px] w-[15px] h-[9px] border border-[#e0e0e0] flex items-stretch"><div class="w-[8px] bg-[#f0f0f0]"></div></div>
        <svg class="ml-[7px] mt-[9px] w-[16px] h-[15px]" viewBox="0 0 16 15" fill="none" stroke="#b8b8b8" stroke-width="1.100"><path d="M1 5h3l4-4v13l-4-4H1zM10.500 5a4 4 0 0 1 0 5M12.500 3a7 7 0 0 1 0 9"/></svg>
        <svg class="ml-[7px] mt-[7px] w-[16px] h-[16px]" viewBox="0 0 16 16" fill="none" stroke="#d0d0d0" stroke-width="1.100"><circle cx="8" cy="8" r="7.200"/><ellipse cx="8" cy="8" rx="3.500" ry="7.200"/><path d="M1 5.500h14M1 10.500h14"/></svg>
        <div class="ml-[5px] w-[28px] flex flex-col items-center text-[#d8d8d8] gap-[4px] mt-[5px] text-[12px]">
          <span>ENG</span>
          <span>US</span>
        </div>
        <div class="w-[68px] flex flex-col items-center text-[#d8d8d8] gap-[4px] mt-[5px] text-[12px] whitespace-nowrap">
          <span>4:00 PM</span>
          <span>11/1/2020</span>
        </div>
        <svg class="ml-[7px] mt-[11px] mr-[10px] w-[16px] h-[16px]" viewBox="0 0 16 16" fill="none" stroke="#e0e0e0" stroke-width="1.100"><path d="M1 1h14v10H10l-2 3-2-3H1z"/></svg>
      </div>
    </div>
  </div>
</body>
</html>
